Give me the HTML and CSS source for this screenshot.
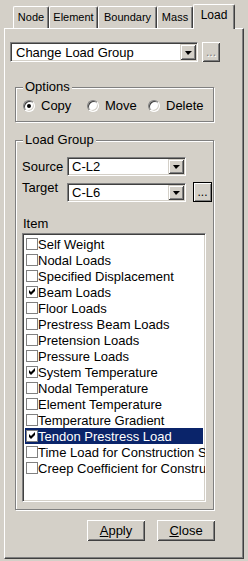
FILE: index.html
```html
<!DOCTYPE html>
<html lang="en">
<head>
  <meta charset="UTF-8">
  <title>Load</title>
  <link rel="stylesheet" href="styles.css">
</head>
<body>
  <div class="tabs">
    <div class="tab t-node">Node</div>
    <div class="tab t-element">Element</div>
    <div class="tab t-boundary">Boundary</div>
    <div class="tab t-mass">Mass</div>
    <div class="tab t-load active">Load</div>
  </div>
  <div class="pane">
    <div class="top-row">
      <div class="combo wide"><span class="value">Change Load Group</span><span class="arrow"></span></div>
      <button class="btn dots" disabled>...</button>
    </div>

    <div class="group options">
      <div class="legend">Options</div>
      <div class="radios">
        <label class="radio r-copy"><span class="circle checked"></span>Copy</label>
        <label class="radio r-move"><span class="circle"></span>Move</label>
        <label class="radio"><span class="circle"></span>Delete</label>
      </div>
    </div>

    <div class="group loadgroup">
      <div class="legend">Load Group</div>
      <div class="field source">
        <span class="field-label">Source</span>
        <div class="combo small"><span class="value">C-L2</span><span class="arrow"></span></div>
      </div>
      <div class="field target">
        <span class="field-label">Target</span>
        <div class="combo small"><span class="value">C-L6</span><span class="arrow"></span></div>
        <button class="btn dots default">...</button>
      </div>
      <div class="item-label">Item</div>
      <div class="list">
        <div class="item"><span class="box"></span>Self Weight</div>
        <div class="item"><span class="box"></span>Nodal Loads</div>
        <div class="item"><span class="box"></span>Specified Displacement</div>
        <div class="item"><span class="box"><svg viewBox="0 0 10 10" width="10" height="10"><polygon points="2,3 4,5 8,1 8,4 4,8 2,6"/></svg></span>Beam Loads</div>
        <div class="item"><span class="box"></span>Floor Loads</div>
        <div class="item"><span class="box"></span>Prestress Beam Loads</div>
        <div class="item"><span class="box"></span>Pretension Loads</div>
        <div class="item"><span class="box"></span>Pressure Loads</div>
        <div class="item"><span class="box"><svg viewBox="0 0 10 10" width="10" height="10"><polygon points="2,3 4,5 8,1 8,4 4,8 2,6"/></svg></span>System Temperature</div>
        <div class="item"><span class="box"></span>Nodal Temperature</div>
        <div class="item"><span class="box"></span>Element Temperature</div>
        <div class="item"><span class="box"></span>Temperature Gradient</div>
        <div class="item selected"><span class="box"><svg viewBox="0 0 10 10" width="10" height="10"><polygon points="2,3 4,5 8,1 8,4 4,8 2,6"/></svg></span>Tendon Prestress Load</div>
        <div class="item"><span class="box"></span>Time Load for Construction Stage</div>
        <div class="item"><span class="box"></span>Creep Coefficient for Construction Stage</div>
      </div>
    </div>

    <div class="actions">
      <button class="btn push"><u>A</u>pply</button>
      <button class="btn push"><u>C</u>lose</button>
    </div>
  </div>
</body>
</html>
```

FILE: styles.css
```css
body {
  margin: 0;
  width: 248px;
  height: 561px;
  overflow: hidden;
  background: #d4d0c8;
  font-family: "Liberation Sans", Arial, sans-serif;
  font-size: 12px;
  color: #000;
}

/* tab strip */
.tabs {
  display: flex;
  align-items: flex-end;
  height: 28px;
  padding-left: 13px;
  font-size: 11px;
}
.tab {
  box-sizing: border-box;
  height: 22px;
  line-height: 20px;
  text-align: center;
  border-top: 1px solid #fff;
  border-left: 1px solid #fff;
  border-right: 1px solid #404040;
  box-shadow: inset -1px 0 #808080;
  border-radius: 2px 2px 0 0;
}
.tab.active {
  position: relative;
  z-index: 1;
  height: 25px;
  margin-bottom: -1px;
  line-height: 20px;
  background: #d4d0c8;
  font-size: 12px;
}
.t-node { width: 36px; }
.t-element { width: 49px; }
.t-boundary { width: 59px; }
.t-mass { width: 36px; }
.t-load { width: 42px; }

.pane {
  box-sizing: border-box;
  width: 240px;
  height: 531px;
  margin-left: 4px;
  padding: 13px 0 0 5px;
  border: 1px solid;
  border-color: #fff #404040 #404040 #fff;
  box-shadow: inset -1px -1px #808080;
}

.top-row {
  display: flex;
  gap: 4px;
}

/* combo boxes */
.combo {
  box-sizing: border-box;
  display: flex;
  padding: 1px;
  background: #fff;
  border: 1px solid;
  border-color: #808080 #fff #fff #808080;
  box-shadow: inset 1px 1px #404040, inset -1px -1px #d4d0c8;
}
.combo.wide { width: 188px; height: 20px; }
.combo.small { width: 119px; height: 19px; }
.combo .value {
  flex: 1;
  padding-left: 3px;
  white-space: nowrap;
  overflow: hidden;
  display: flex;
  align-items: center;
}
.combo.wide .value { font-size: 13px; padding-left: 4px; }
.combo .arrow {
  width: 16px;
  display: flex;
  align-items: center;
  justify-content: center;
  background: #d4d0c8;
  box-shadow: inset 1px 1px #d4d0c8, inset -1px -1px #404040, inset 2px 2px #fff, inset -2px -2px #808080;
}
.combo .arrow::after {
  content: "";
  width: 0;
  height: 0;
  border-left: 3px solid transparent;
  border-right: 4px solid transparent;
  border-top: 4px solid #000;
  margin-top: 1px;
}

/* buttons */
.btn {
  box-sizing: border-box;
  padding: 0;
  border: none;
  background: #d4d0c8;
  font-family: inherit;
  font-size: 12px;
  color: #000;
  box-shadow: inset 1px 1px #fff, inset -1px -1px #404040, inset 2px 2px #d4d0c8, inset -2px -2px #808080;
}
.dots {
  width: 18px;
  height: 20px;
  line-height: 14px;
}
.dots:disabled {
  color: #808080;
  text-shadow: 1px 1px #fff;
}
.dots.default {
  width: 19px;
  height: 20px;
  margin-left: 7px;
  border: 1px solid #000;
  box-shadow: inset 1px 1px #fff, inset -1px -1px #808080;
}
.push {
  width: 58px;
  height: 21px;
  font-size: 13px;
}

/* group boxes */
.group {
  box-sizing: border-box;
  width: 199px;
  margin-left: 5px;
  border: 1px solid #808080;
  box-shadow: 1px 1px 0 #fff, inset 1px 1px 0 #fff;
}
.legend {
  width: max-content;
  margin: -8px 0 0 7px;
  padding: 0 2px;
  line-height: 14px;
  background: #d4d0c8;
  font-size: 13px;
}
.options {
  height: 35px;
  margin-top: 25px;
}
.radios {
  display: flex;
  margin-top: 5px;
  padding-left: 7px;
  font-size: 13px;
  line-height: 14px;
}
.radio {
  display: flex;
  align-items: center;
}
.r-copy { width: 64px; }
.r-move { width: 61px; }
.circle {
  box-sizing: border-box;
  width: 12px;
  height: 12px;
  margin-right: 6px;
  border-radius: 50%;
  border: 1px solid;
  border-color: #808080 #fff #fff #808080;
  background: #fff;
  box-shadow: inset 1px 1px #404040, inset -1px -1px #d4d0c8;
  display: flex;
  align-items: center;
  justify-content: center;
}
.circle.checked::after {
  content: "";
  width: 4px;
  height: 4px;
  border-radius: 50%;
  background: #000;
}

.loadgroup {
  height: 370px;
  margin-top: 18px;
}
.field {
  display: flex;
  align-items: center;
  padding-left: 6px;
  font-size: 13px;
}
.field-label { width: 45px; line-height: 14px; }
.source { margin-top: 10px; height: 19px; }
.target { margin-top: 6px; height: 20px; }
.target .field-label { align-self: flex-start; margin-top: -1px; }
.item-label {
  margin-top: 15px;
  padding-left: 7px;
  line-height: 14px;
  font-size: 13px;
}

/* check list */
.list {
  box-sizing: border-box;
  width: 184px;
  height: 269px;
  margin: 2px 0 0 6px;
  padding: 2px;
  background: #fff;
  border: 1px solid;
  border-color: #808080 #fff #fff #808080;
  box-shadow: inset 1px 1px #404040, inset -1px -1px #d4d0c8;
  overflow: hidden;
}
.item {
  display: flex;
  align-items: center;
  height: 16px;
  white-space: nowrap;
  font-size: 13px;
}
.item.selected {
  background: #0a246a;
  color: #fff;
}
.box {
  box-sizing: border-box;
  flex: none;
  width: 12px;
  height: 12px;
  margin: 0 0 0 1px;
  border: 1px solid #808080;
  background: #fff;
}
.box svg { display: block; fill: #000; }

.actions {
  display: flex;
  justify-content: flex-end;
  gap: 12px;
  width: 200px;
  margin: 10px 0 0 5px;
}
```
